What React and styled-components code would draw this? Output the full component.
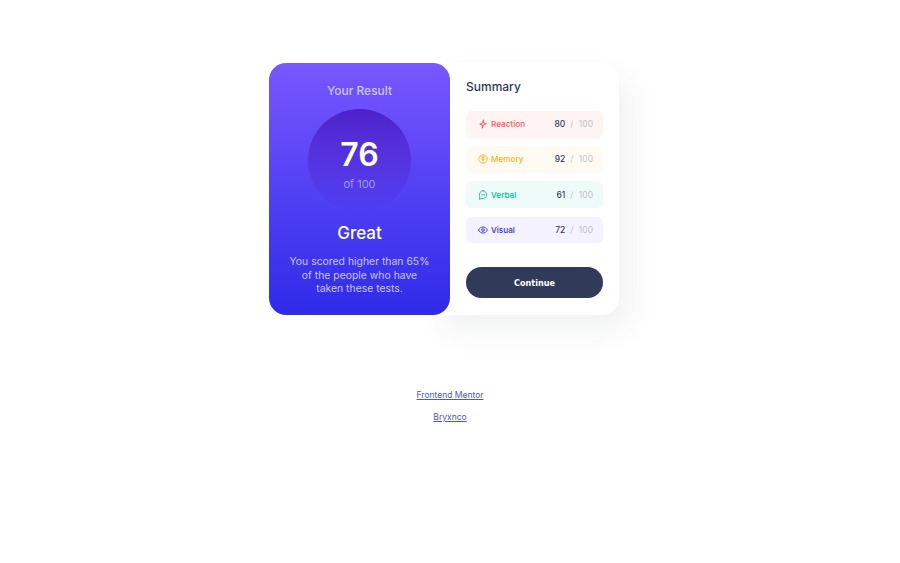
import React from 'react';
import styled, { createGlobalStyle } from 'styled-components';

const GlobalStyle = createGlobalStyle`
  html, body {
    margin: 0;
    padding: 0;
    background: #ffffff;
    font-family: 'Inter', 'Liberation Sans', sans-serif;
  }
`;

const Page = styled.main`
  display: flex;
  flex-direction: column;
  align-items: center;
  min-height: 563px;
  padding-top: 63px;
  box-sizing: border-box;
`;

const Card = styled.section`
  display: flex;
  width: 350px;
  height: 252px;
  margin-left: -12px;
`;

const ResultPanel = styled.div`
  position: relative;
  z-index: 1;
  flex: 0 0 181px;
  display: flex;
  flex-direction: column;
  align-items: center;
  box-sizing: border-box;
  padding-top: 20px;
  border-radius: 17px;
  background: linear-gradient(180deg, #7857ff 0%, #2e2be9 100%);
`;

const ResultTitle = styled.h2`
  margin: 0;
  font-size: 12px;
  line-height: 16px;
  font-weight: 500;
  color: #c8c7ff;
`;

const ScoreCircle = styled.div`
  width: 103px;
  height: 103px;
  margin-top: 10px;
  border-radius: 50%;
  display: flex;
  flex-direction: column;
  align-items: center;
  justify-content: center;
  background: linear-gradient(180deg, #4d21c9 0%, rgba(37, 33, 201, 0) 100%);
`;

const ScoreValue = styled.span`
  margin-top: 5px;
  font-size: 32px;
  line-height: 40px;
  font-weight: 600;
  color: #ffffff;
`;

const ScoreTotal = styled.span`
  margin-top: 2px;
  font-size: 11px;
  line-height: 15px;
  color: #a29cf5;
`;

const Verdict = styled.h3`
  margin: 10px 0 0;
  font-size: 17px;
  line-height: 22px;
  font-weight: 500;
  color: #ffffff;
`;

const Blurb = styled.p`
  margin: 11px 0 0;
  width: 143px;
  text-align: center;
  font-size: 10.4px;
  line-height: 13.6px;
  color: #c8c7ff;
`;

const SummaryPanel = styled.div`
  flex: 1;
  margin-left: -16px;
  box-sizing: border-box;
  padding: 16px 16px 0 32px;
  border-radius: 0 17px 17px 0;
  background: #ffffff;
  box-shadow: 10px 15px 30px rgba(48, 59, 89, 0.07);
`;

const SummaryTitle = styled.h2`
  margin: 0;
  font-size: 12px;
  line-height: 16px;
  font-weight: 500;
  color: #303b59;
`;

const Rows = styled.div`
  display: flex;
  flex-direction: column;
  gap: 8.7px;
  margin-top: 16px;
`;

const Row = styled.div`
  display: flex;
  align-items: center;
  height: 26.5px;
  padding: 0 10px 0 12px;
  border-radius: 6px;
  background: ${p => p.$bg};
`;

const RowLabel = styled.span`
  display: flex;
  align-items: center;
  gap: 3px;
  flex: 1;
  font-size: 8.2px;
  font-weight: 500;
  color: ${p => p.$color};
`;

const RowScore = styled.span`
  font-size: 8.5px;
  font-weight: 500;
  color: #303b59;
`;

const RowTotal = styled.span`
  margin-left: 5px;
  font-size: 8.5px;
  color: #c1c2c9;
  word-spacing: 3px;
`;

const ContinueButton = styled.button`
  display: block;
  width: 100%;
  height: 31px;
  margin-top: 24px;
  border: 0;
  border-radius: 16px;
  background: #303b59;
  color: #ffffff;
  font-family: 'DejaVu Sans', sans-serif;
  font-size: 8.1px;
  font-weight: 700;
`;

const Attribution = styled.footer`
  display: flex;
  flex-direction: column;
  align-items: center;
  gap: 12.5px;
  margin-top: 74.5px;
`;

const CreditLink = styled.a`
  font-size: 8.5px;
  line-height: 10px;
  color: #4a5bb8;
  text-decoration: underline;
`;

const Icon = styled.svg`
  width: 10px;
  height: 10px;
  flex: none;
`;

const ReactionIcon = () => (
  <Icon viewBox="0 0 20 20" fill="none" stroke="currentColor" strokeWidth="1.9" strokeLinejoin="round">
    <path d="M11 1.5 9 8 3.500 10.500 9 12l-.5 6.500 2.500-6.500 5.500-2.500L11 8l0-6.500Z" />
  </Icon>
);

const MemoryIcon = () => (
  <Icon viewBox="0 0 20 20" fill="none" stroke="currentColor" strokeWidth="1.6" strokeLinecap="round">
    <circle cx="10" cy="10" r="8.4" />
    <path d="M10 2v16M10 7 6.500 5M10 7l3.500-2M10 12l-4-2M10 12l4-2" />
  </Icon>
);

const VerbalIcon = () => (
  <Icon viewBox="0 0 20 20" fill="none" stroke="currentColor" strokeWidth="1.7" strokeLinecap="round" strokeLinejoin="round">
    <path d="M10.500 1.500a8 8 0 0 0-7 11.900L2.500 18.500l5-1.300a8 8 0 1 0 3-15.700Z" />
    <path d="M7 9.500h6.500" />
  </Icon>
);

const VisualIcon = () => (
  <Icon viewBox="0 0 20 20" fill="none" stroke="currentColor" strokeWidth="1.8" strokeLinejoin="round">
    <path d="M1 10c2.400-4 5.400-6 9-6s6.600 2 9 6c-2.400 4-5.400 6-9 6s-6.600-2-9-6Z" />
    <circle cx="10" cy="10" r="2.600" />
  </Icon>
);

const scores = [
  { name: 'Reaction', score: 80, color: '#ff5757', bg: '#fff3f3', icon: <ReactionIcon /> },
  { name: 'Memory', score: 92, color: '#ffb01f', bg: '#fffbf2', icon: <MemoryIcon /> },
  { name: 'Verbal', score: 61, color: '#00bb8f', bg: '#effbf8', icon: <VerbalIcon /> },
  { name: 'Visual', score: 72, color: '#2e2be9', bg: '#f3f2fe', icon: <VisualIcon /> }
];

export default function App() {
  return (
    <Page>
      <GlobalStyle />
      <Card>
        <ResultPanel>
          <ResultTitle>Your Result</ResultTitle>
          <ScoreCircle>
            <ScoreValue>76</ScoreValue>
            <ScoreTotal>of 100</ScoreTotal>
          </ScoreCircle>
          <Verdict>Great</Verdict>
          <Blurb>You scored higher than 65% of the people who have taken these tests.</Blurb>
        </ResultPanel>
        <SummaryPanel>
          <SummaryTitle>Summary</SummaryTitle>
          <Rows>
            {scores.map(item => (
              <Row key={item.name} $bg={item.bg}>
                <RowLabel $color={item.color}>
                  {item.icon}
                  {item.name}
                </RowLabel>
                <RowScore>{item.score}</RowScore>
                <RowTotal>/ 100</RowTotal>
              </Row>
            ))}
          </Rows>
          <ContinueButton>Continue</ContinueButton>
        </SummaryPanel>
      </Card>
      <Attribution>
        <CreditLink href="#">Frontend Mentor</CreditLink>
        <CreditLink href="#">Bryxnco</CreditLink>
      </Attribution>
    </Page>
  );
}
